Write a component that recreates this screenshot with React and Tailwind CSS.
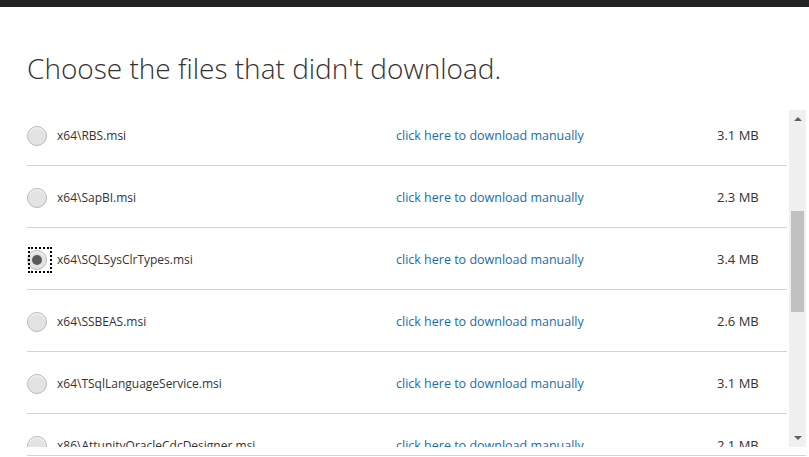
import React, { useState } from 'react';

const files = [
  { name: 'x64\\RBS.msi', size: '3.1 MB' },
  { name: 'x64\\SapBI.msi', size: '2.3 MB' },
  { name: 'x64\\SQLSysClrTypes.msi', size: '3.4 MB' },
  { name: 'x64\\SSBEAS.msi', size: '2.6 MB' },
  { name: 'x64\\TSqlLanguageService.msi', size: '3.1 MB' },
  { name: 'x86\\AttunityOracleCdcDesigner.msi', size: '2.1 MB' },
];

const Radio = ({ checked, focused }) => (
  <span className="relative flex h-[20px] w-[20px] shrink-0 items-center justify-center">
    <span className="flex h-[20px] w-[20px] items-center justify-center rounded-full border border-[#b9b9b9] bg-[#e3e3e3] shadow-[inset_0_1px_1px_rgba(255,255,255,0.9)]">
      {checked && <span className="h-[10px] w-[10px] rounded-full bg-[#595959]" />}
    </span>
    {focused && (
      <span className="absolute left-[1px] top-[-3px] h-[26px] w-[24px] border-2 border-dotted border-black" />
    )}
  </span>
);

const FileRow = ({ file, checked, onPick }) => (
  <div
    className="flex h-[62px] shrink-0 items-center border-b border-[#d4d4d4] pt-[3px]"
    onClick={onPick}
  >
    <div className="flex w-[369px] items-center gap-[10px]">
      <Radio checked={checked} focused={checked} />
      <span className="text-[12px] text-[#333]">{file.name}</span>
    </div>
    <a className="w-[321px] text-[12.5px] text-[#1a6ea6]" href="#">
      click here to download manually
    </a>
    <span className="text-[13px] text-[#333]">{file.size}</span>
  </div>
);

export default function App() {
  const [picked, setPicked] = useState(2);

  return (
    <div
      className="h-[457px] w-[809px] overflow-hidden bg-white"
      style={{ fontFamily: '"Open Sans", "Noto Sans", Arial, sans-serif' }}
    >
      <div className="h-[7px] bg-[#222222]" />
      <h1 className="ml-[27px] mt-[44px] text-[28px] font-light leading-[34px] text-[#333]">
        Choose the files that didn't download.
      </h1>
      <div className="ml-[27px] mt-[25px] w-[779px] border-b border-[#d4d4d4] pb-[8px]">
        <div className="flex h-[337px] gap-[2px]">
          <div className="h-full w-[760px] shrink-0 overflow-hidden">
            <div className="-mt-[6px] flex flex-col">
              {files.map((f, i) => (
                <FileRow key={f.name} file={f} checked={picked === i} onPick={() => setPicked(i)} />
              ))}
            </div>
          </div>
          <div className="flex w-[17px] shrink-0 flex-col items-center bg-[#f0f0f0]">
            <svg className="mt-[6px] h-[6px] w-[8px]" viewBox="0 0 8 6">
              <path d="M0 5 L4 1 L8 5 Z" fill="#606060" />
            </svg>
            <div className="mt-[89px] h-[101px] w-[13px] bg-[#c1c1c1]" />
            <div className="flex-1" />
            <svg className="mb-[6px] h-[6px] w-[8px]" viewBox="0 0 8 6">
              <path d="M0 1 L8 1 L4 5 Z" fill="#606060" />
            </svg>
          </div>
        </div>
      </div>
    </div>
  );
}
